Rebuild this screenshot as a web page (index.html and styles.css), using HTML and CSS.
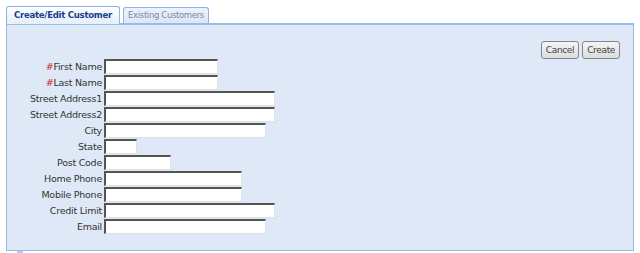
FILE: index.html
```html
<!DOCTYPE html>
<html>
<head>
<meta charset="utf-8">
<link rel="stylesheet" href="styles.css">
</head>
<body>
<div class="wrap">
  <div class="tabs">
    <div class="tab active">Create/Edit Customer</div>
    <div class="tab">Existing Customers</div>
  </div>
  <div class="panel">
    <div class="toolbar">
      <button class="btn">Cancel</button>
      <button class="btn">Create</button>
    </div>
    <div class="form">
      <label class="lbl"><span class="req">#</span>First Name</label><div class="field"><input class="inp w114"></div>
      <label class="lbl"><span class="req">#</span>Last Name</label><div class="field"><input class="inp w114"></div>
      <label class="lbl">Street Address1</label><div class="field"><input class="inp w171"></div>
      <label class="lbl">Street Address2</label><div class="field"><input class="inp w171"></div>
      <label class="lbl">City</label><div class="field"><input class="inp w162"></div>
      <label class="lbl">State</label><div class="field"><input class="inp w33"></div>
      <label class="lbl">Post Code</label><div class="field"><input class="inp w67"></div>
      <label class="lbl">Home Phone</label><div class="field"><input class="inp w138"></div>
      <label class="lbl">Mobile Phone</label><div class="field"><input class="inp w138"></div>
      <label class="lbl">Credit Limit</label><div class="field"><input class="inp w171"></div>
      <label class="lbl">Email</label><div class="field"><input class="inp w162"></div>
    </div>
  </div>
  <div class="foot"><span class="nub"></span></div>
</div>
</body>
</html>
```

FILE: styles.css
```css
html, body {
  margin: 0;
  padding: 0;
  background: #ffffff;
}
body {
  font-family: "DejaVu Sans", Verdana, sans-serif;
  font-size: 10px;
}
.wrap {
  padding: 6px 6px 0 6px;
  width: 628px;
}
.tabs {
  display: flex;
  align-items: flex-end;
  gap: 3px;
  height: 17px;
}
.tab {
  box-sizing: border-box;
  width: 86px;
  height: 16px;
  border: 1px solid #8db2e3;
  border-bottom: none;
  border-radius: 3px 3px 0 0;
  background: linear-gradient(#edf3fb, #dbe6f6);
  color: #7d8aa3;
  font-size: 8.5px;
  line-height: 15px;
  text-align: center;
  letter-spacing: -0.35px;
  white-space: nowrap;
}
.tab.active {
  width: 114px;
  height: 18px;
  margin-bottom: -1px;
  background: linear-gradient(#ffffff, #e6eef9);
  color: #15428b;
  font-weight: bold;
  font-size: 8.6px;
  letter-spacing: -0.3px;
  line-height: 17px;
  position: relative;
  z-index: 1;
}
.panel {
  box-sizing: border-box;
  height: 228px;
  background: #dfe8f6;
  border: 1px solid #99bbe8;
  border-top: 2px solid #99bbe8;
  padding: 16px 13px 0 0;
}
.toolbar {
  display: flex;
  justify-content: flex-end;
  gap: 3px;
  height: 18px;
}
.btn {
  box-sizing: border-box;
  height: 18px;
  font-family: "DejaVu Sans", Verdana, sans-serif;
  font-size: 9px;
  color: #444;
  padding: 0 4px;
  border: 1px solid #7f8793;
  border-radius: 3px;
  background: linear-gradient(#f5f5f5, #dcdcdc);
  letter-spacing: -0.35px;
}
.form {
  display: grid;
  grid-template-columns: 95px auto;
  column-gap: 2px;
  row-gap: 1px;
  margin-top: 0;
}
.lbl {
  text-align: right;
  color: #333;
  font-size: 9.5px;
  letter-spacing: -0.25px;
  line-height: 15px;
  height: 15px;
  white-space: nowrap;
}
.req {
  color: #d0201e;
}
.field {
  height: 15px;
}
.inp {
  box-sizing: border-box;
  display: block;
  height: 15px;
  margin: 0;
  padding: 0;
  background: #fff;
  border: 1px solid;
  border-color: #707070 #e0e0e0 #e0e0e0 #707070;
  border-top: 2px solid #555;
  border-left: 2px solid #555;
  outline: none;
}
.w114 { width: 114px; }
.w171 { width: 171px; }
.w162 { width: 162px; }
.w33 { width: 33px; }
.w67 { width: 67px; }
.w138 { width: 138px; }
.foot {
  height: 3px;
  padding-left: 11px;
}
.nub {
  display: block;
  width: 6px;
  height: 2px;
  background: #b7cbe9;
}
```
